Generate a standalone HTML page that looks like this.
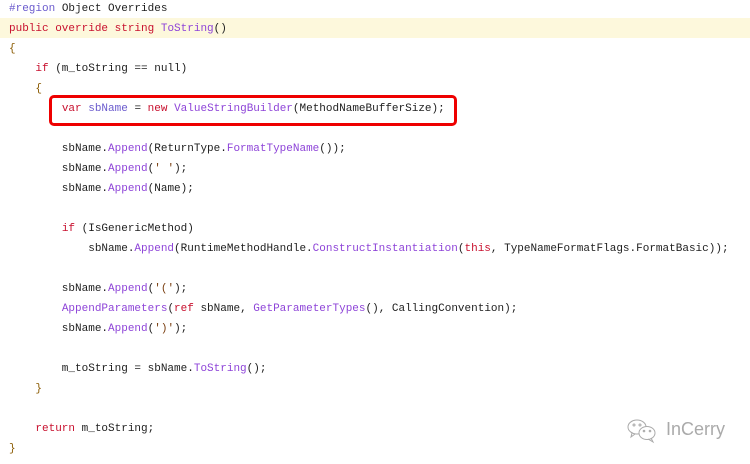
<!DOCTYPE html>
<html><head><meta charset="utf-8"><style>
html,body{margin:0;padding:0;background:#fff;width:750px;height:464px;overflow:hidden;position:relative}
pre{margin:0;position:absolute;left:9px;top:-1px;font-family:"Liberation Mono",monospace;font-size:11px;line-height:20px;color:#1e1e1e;white-space:pre}
.hl{position:absolute;left:0;top:18px;width:750px;height:20px;background:#fdf8dc}
.k{color:#c8102e}.m{color:#8e44d8}.p{color:#6a5acd}.s{color:#7a3e10}.b{color:#8a5a00}
.box{position:absolute;left:49px;top:95px;width:402px;height:25px;border:3px solid #ee0000;border-radius:5px}
.logo{position:absolute;left:666px;top:419px;font-family:"Liberation Sans",sans-serif;font-size:18px;color:#aaa}
</style></head><body>
<div class="hl"></div>
<pre><span class="p">#region</span> Object Overrides
<span class="k">public override string</span> <span class="m">ToString</span>()
<span class="b">{</span>
    <span class="k">if</span> (m_toString == null)
    <span class="b">{</span>
        <span class="k">var</span> <span class="p">sbName</span> = <span class="k">new</span> <span class="m">ValueStringBuilder</span>(MethodNameBufferSize);

        sbName.<span class="m">Append</span>(ReturnType.<span class="m">FormatTypeName</span>());
        sbName.<span class="m">Append</span>(<span class="s">' '</span>);
        sbName.<span class="m">Append</span>(Name);

        <span class="k">if</span> (IsGenericMethod)
            sbName.<span class="m">Append</span>(RuntimeMethodHandle.<span class="m">ConstructInstantiation</span>(<span class="k">this</span>, TypeNameFormatFlags.FormatBasic));

        sbName.<span class="m">Append</span>(<span class="s">'('</span>);
        <span class="m">AppendParameters</span>(<span class="k">ref</span> sbName, <span class="m">GetParameterTypes</span>(), CallingConvention);
        sbName.<span class="m">Append</span>(<span class="s">')'</span>);

        m_toString = sbName.<span class="m">ToString</span>();
    <span class="b">}</span>

    <span class="k">return</span> m_toString;
<span class="b">}</span></pre>
<div class="box"></div>
<svg style="position:absolute;left:626px;top:418px" width="36" height="26" viewBox="0 0 36 26" fill="none" stroke="#aaa" stroke-width="1">
<ellipse cx="11" cy="9" rx="9" ry="7"/><path d="M6 15 L5 19 L9 16"/>
<ellipse cx="21" cy="15" rx="8" ry="6.5" fill="#fff"/><path d="M25 20 L27 24 L22 21"/>
<circle cx="8" cy="7" r="1"/><circle cx="14" cy="7" r="1"/><circle cx="18" cy="13" r="0.8"/><circle cx="24" cy="13" r="0.8"/>
</svg>
<div class="logo">InCerry</div>
</body></html>
